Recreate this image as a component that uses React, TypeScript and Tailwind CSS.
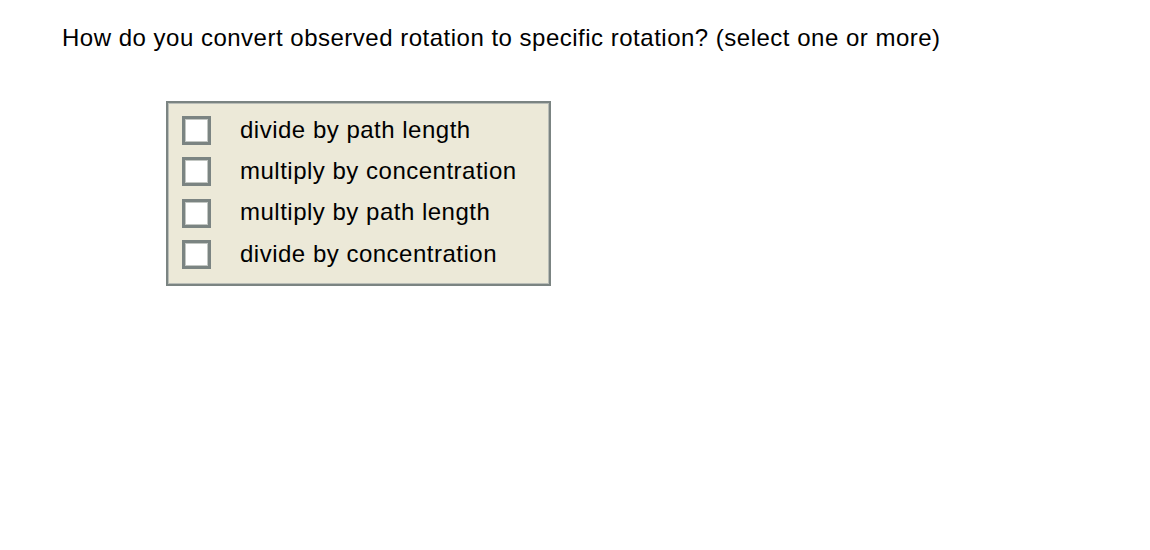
import { useState } from "react";

const options = [
  "divide by path length",
  "multiply by concentration",
  "multiply by path length",
  "divide by concentration",
];

export default function App() {
  const [checked, setChecked] = useState<boolean[]>([false, false, false, false]);

  const toggle = (i: number) => {
    setChecked(checked.map((c, j) => (j === i ? !c : c)));
  };

  return (
    <div className="min-h-[550px] bg-white pl-[62px] pt-[24px] font-['Liberation_Sans',Arial,sans-serif] text-[24px] tracking-[0.5px] text-black">
      <p className="leading-[28px]">
        How do you convert observed rotation to specific rotation? (select one or more)
      </p>

      {/* Answer box */}
      <div className="ml-[104px] mt-[49px] w-[385px] border-2 border-[#7b8482] bg-[#ece9d8] shadow-[inset_1px_1px_0_#b9bdb7,inset_-1px_-1px_0_#b9bdb7] pb-[9px] pl-[14px] pt-[7px]">
        {options.map((opt, i) => (
          <label
            key={opt}
            className="flex h-[41.3px] cursor-pointer items-center"
            onClick={() => toggle(i)}
          >
            <span className="flex h-[29px] w-[29px] shrink-0 items-center justify-center border-[3px] border-[#7b8482] bg-white shadow-[inset_0_0_0_1px_#c3c7c3]">
              {checked[i] && <span className="text-[18px] leading-none">✓</span>}
            </span>
            <span className="-mt-[2px] ml-[29px] whitespace-nowrap leading-[28px]">{opt}</span>
          </label>
        ))}
      </div>
    </div>
  );
}
